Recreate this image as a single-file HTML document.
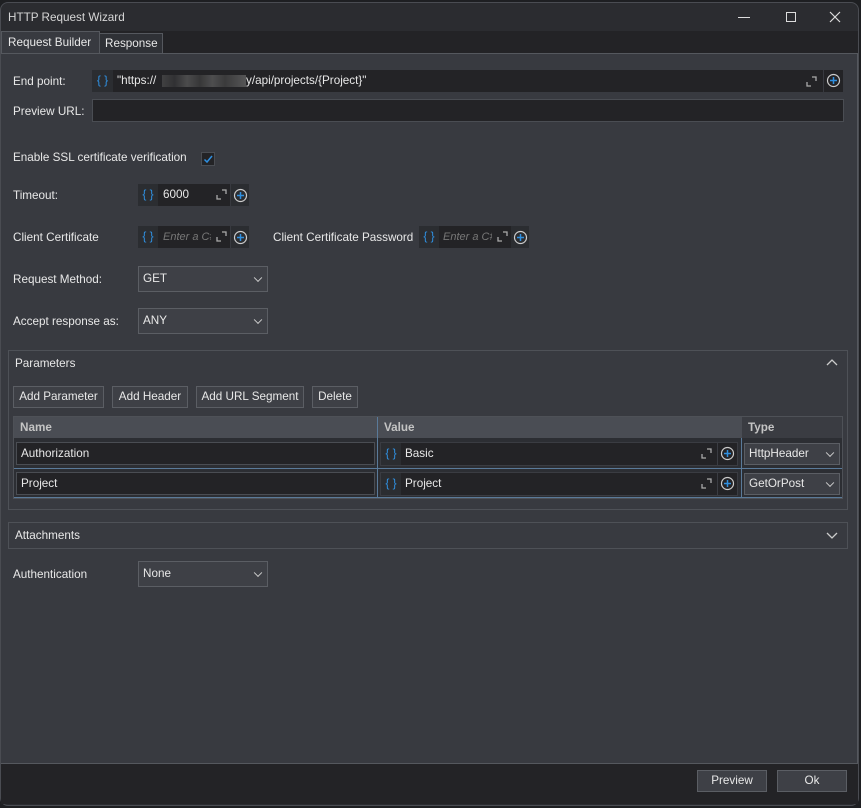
<!DOCTYPE html>
<html><head><meta charset="utf-8"><style>
*{box-sizing:border-box;margin:0;padding:0}
body{width:861px;height:808px;background:#1e1f22;font-family:"Liberation Sans",sans-serif;font-size:11.7px;color:#e8e8e8;position:relative;overflow:hidden}
.a{position:absolute}
.t{position:absolute;white-space:nowrap;line-height:14px}
.inp{position:absolute;background:#232326;border:1px solid #4a4d53}
.ex{position:absolute;background:#232326}
.br{position:absolute;background:#2b2d31;color:#2f8fe0;font-size:12px;text-align:center}
.btn{position:absolute;background:#3e4046;border:1px solid #5b5e64;text-align:center;line-height:19px;color:#e8e8e8}
.sel{position:absolute;background:#3e4046;border:1px solid #5b5e64;padding-left:4px;color:#e8e8e8}
.chev{position:absolute;right:6px;top:50%;width:6px;height:6px;border-right:1.3px solid #ccc;border-bottom:1.3px solid #ccc;transform:translateY(-70%) rotate(45deg)}
.ph{color:#777;font-style:italic;font-size:11px}
</style></head><body>
<div class="a" style="left:0;top:2px;width:859px;height:804px;background:#2b2c30;border-radius:8px;border:1px solid #4a4c52"></div>
<div class="t" style="left:8px;top:11px;color:#d6d6d6">HTTP Request Wizard</div>
<div class="a" style="left:738px;top:17px;width:12px;height:1px;background:#ddd"></div>
<div class="a" style="left:786px;top:12px;width:10px;height:10px;border:1px solid #ddd"></div>
<svg class="a" style="left:829px;top:11px" width="12" height="12"><path d="M1 1L11 11M11 1L1 11" stroke="#ddd" stroke-width="1.2"/></svg>
<div class="a" style="left:1px;top:31px;width:857px;height:22px;background:#232326"></div>
<div class="a" style="left:1px;top:31px;width:99px;height:23px;background:#383a40;border:1px solid #55585e;border-bottom:none"></div>
<div class="t" style="left:8px;top:36px">Request Builder</div>
<div class="a" style="left:99px;top:33px;width:64px;height:21px;background:#2f3136;border:1px solid #55585e"></div>
<div class="t" style="left:105px;top:37px">Response</div>
<div class="a" style="left:1px;top:53px;width:857px;height:711px;background:#383a40;border-top:1px solid #55585e;border-right:1px solid #55585e;border-bottom:1px solid #55585e"></div>
<div class="a" style="left:1px;top:764px;width:857px;height:40px;background:#232326"></div>
<div class="btn" style="left:697px;top:770px;width:70px;height:22px">Preview</div>
<div class="btn" style="left:777px;top:770px;width:70px;height:22px">Ok</div>

<div class="t" style="left:13px;top:75px">End point:</div>
<div class="ex" style="left:92px;top:70px;width:751px;height:22px"></div>
<div class="br" style="left:92px;top:70px;width:21px;height:22px;line-height:21px">{ }</div>
<div class="t" style="left:117px;top:74px">"https://</div>
<div class="a" style="left:162px;top:75px;width:84px;height:12px;background:linear-gradient(90deg,#555 0,#3a3a3c 15%,#666 30%,#444 45%,#6a6a6a 60%,#4a4a4a 75%,#777 100%);opacity:.6"></div>
<div class="t" style="left:246px;top:74px">y/api/projects/{Project}"</div>
<svg class="a" style="left:806px;top:76px" width="11" height="11"><path d="M1 6V10H5M6 1H10V5" stroke="#aaa" stroke-width="1.3" fill="none"/></svg>
<div class="a" style="left:823px;top:70px;width:1px;height:22px;background:#383a40"></div>
<svg class="a" style="left:826px;top:73px" width="15" height="15"><circle cx="7.5" cy="7.5" r="6" stroke="#ccc" stroke-width="1.2" fill="none"/><path d="M7.5 4V11M4 7.5H11" stroke="#2f8fe0" stroke-width="1.5"/></svg>

<div class="t" style="left:13px;top:105px">Preview URL:</div>
<div class="inp" style="left:92px;top:99px;width:752px;height:23px"></div>

<div class="t" style="left:13px;top:151px">Enable SSL certificate verification</div>
<div class="a" style="left:201px;top:152px;width:14px;height:14px;background:#232326;border:1px solid #4a4d53"></div>
<svg class="a" style="left:202px;top:153px" width="12" height="12"><path d="M2.5 6.5L5 9L10 3" stroke="#2f8fe0" stroke-width="1.5" fill="none"/></svg>

<div class="t" style="left:13px;top:189px">Timeout:</div>
<div class="ex" style="left:138px;top:184px;width:92px;height:22px"></div>
<div class="br" style="left:138px;top:184px;width:20px;height:22px;line-height:21px">{ }</div>
<div class="t" style="left:163px;top:188px">6000</div>
<svg class="a" style="left:216px;top:189px" width="11" height="11"><path d="M1 6V10H5M6 1H10V5" stroke="#aaa" stroke-width="1.3" fill="none"/></svg>
<div class="ex" style="left:231px;top:184px;width:18px;height:22px;background:#2b2d31"></div>
<svg class="a" style="left:233px;top:188px" width="15" height="15"><circle cx="7.5" cy="7.5" r="6" stroke="#ccc" stroke-width="1.2" fill="none"/><path d="M7.5 4V11M4 7.5H11" stroke="#2f8fe0" stroke-width="1.5"/></svg>

<div class="t" style="left:13px;top:231px">Client Certificate</div>
<div class="ex" style="left:138px;top:226px;width:92px;height:22px"></div>
<div class="br" style="left:138px;top:226px;width:20px;height:22px;line-height:21px">{ }</div>
<div class="t ph" style="left:163px;top:230px">Enter a C#</div>
<div class="ex" style="left:211px;top:226px;width:19px;height:22px"></div>
<svg class="a" style="left:216px;top:231px" width="11" height="11"><path d="M1 6V10H5M6 1H10V5" stroke="#aaa" stroke-width="1.3" fill="none"/></svg>
<div class="ex" style="left:231px;top:226px;width:18px;height:22px;background:#2b2d31"></div>
<svg class="a" style="left:233px;top:230px" width="15" height="15"><circle cx="7.5" cy="7.5" r="6" stroke="#ccc" stroke-width="1.2" fill="none"/><path d="M7.5 4V11M4 7.5H11" stroke="#2f8fe0" stroke-width="1.5"/></svg>
<div class="t" style="left:273px;top:231px">Client Certificate Password</div>
<div class="ex" style="left:419px;top:226px;width:92px;height:22px"></div>
<div class="br" style="left:419px;top:226px;width:20px;height:22px;line-height:21px">{ }</div>
<div class="t ph" style="left:443px;top:230px">Enter a C#</div>
<div class="ex" style="left:492px;top:226px;width:19px;height:22px"></div>
<svg class="a" style="left:497px;top:231px" width="11" height="11"><path d="M1 6V10H5M6 1H10V5" stroke="#aaa" stroke-width="1.3" fill="none"/></svg>
<div class="ex" style="left:511px;top:226px;width:18px;height:22px;background:#2b2d31"></div>
<svg class="a" style="left:513px;top:230px" width="15" height="15"><circle cx="7.5" cy="7.5" r="6" stroke="#ccc" stroke-width="1.2" fill="none"/><path d="M7.5 4V11M4 7.5H11" stroke="#2f8fe0" stroke-width="1.5"/></svg>

<div class="t" style="left:13px;top:273px">Request Method:</div>
<div class="sel" style="left:138px;top:266px;width:130px;height:26px;line-height:24px">GET<span class="chev"></span></div>
<div class="t" style="left:13px;top:315px">Accept response as:</div>
<div class="sel" style="left:138px;top:308px;width:130px;height:26px;line-height:24px">ANY<span class="chev"></span></div>

<div class="a" style="left:8px;top:350px;width:840px;height:160px;border:1px solid #4e5157"></div>
<div class="t" style="left:15px;top:357px">Parameters</div>
<svg class="a" style="left:826px;top:359px" width="12" height="8"><path d="M1 6L6 1L11 6" stroke="#ccc" stroke-width="1.3" fill="none"/></svg>
<div class="btn" style="left:13px;top:386px;width:91px;height:22px">Add Parameter</div>
<div class="btn" style="left:112px;top:386px;width:76px;height:22px">Add Header</div>
<div class="btn" style="left:196px;top:386px;width:108px;height:22px">Add URL Segment</div>
<div class="btn" style="left:312px;top:386px;width:46px;height:22px">Delete</div>

<div class="a" style="left:13px;top:416px;width:830px;height:83px;border:1px solid #4e5157;background:#2c2e33"></div>
<div class="a" style="left:14px;top:417px;width:728px;height:21px;background:#4a4d54"></div>
<div class="a" style="left:742px;top:417px;width:100px;height:21px;background:#3a3c42"></div>
<div class="a" style="left:377px;top:417px;width:1px;height:81px;background:#5a7a99"></div>
<div class="a" style="left:741px;top:438px;width:1px;height:60px;background:#5a7a99"></div>
<div class="t" style="left:20px;top:421px;color:#c4c4c4;font-weight:bold">Name</div>
<div class="t" style="left:384px;top:421px;color:#c4c4c4;font-weight:bold">Value</div>
<div class="t" style="left:748px;top:421px;color:#c4c4c4;font-weight:bold">Type</div>
<div class="a" style="left:14px;top:468px;width:828px;height:1px;background:#5a7a99"></div>
<div class="a" style="left:14px;top:497px;width:828px;height:1px;background:#5a7a99"></div>

<div class="inp" style="left:16px;top:442px;width:359px;height:23px"></div>
<div class="t" style="left:21px;top:447px">Authorization</div>
<div class="inp" style="left:16px;top:472px;width:359px;height:23px"></div>
<div class="t" style="left:21px;top:477px">Project</div>

<div class="ex" style="left:380px;top:442px;width:358px;height:24px;border:1px solid #3a3c42"></div>
<div class="br" style="left:381px;top:443px;width:20px;height:22px;line-height:21px">{ }</div>
<div class="t" style="left:405px;top:447px">Basic</div>
<svg class="a" style="left:701px;top:448px" width="11" height="11"><path d="M1 6V10H5M6 1H10V5" stroke="#aaa" stroke-width="1.3" fill="none"/></svg>
<div class="a" style="left:717px;top:443px;width:1px;height:22px;background:#3a3c42"></div>
<svg class="a" style="left:720px;top:446px" width="15" height="15"><circle cx="7.5" cy="7.5" r="6" stroke="#ccc" stroke-width="1.2" fill="none"/><path d="M7.5 4V11M4 7.5H11" stroke="#2f8fe0" stroke-width="1.5"/></svg>

<div class="ex" style="left:380px;top:472px;width:358px;height:24px;border:1px solid #3a3c42"></div>
<div class="br" style="left:381px;top:473px;width:20px;height:22px;line-height:21px">{ }</div>
<div class="t" style="left:405px;top:477px">Project</div>
<svg class="a" style="left:701px;top:478px" width="11" height="11"><path d="M1 6V10H5M6 1H10V5" stroke="#aaa" stroke-width="1.3" fill="none"/></svg>
<div class="a" style="left:717px;top:473px;width:1px;height:22px;background:#3a3c42"></div>
<svg class="a" style="left:720px;top:476px" width="15" height="15"><circle cx="7.5" cy="7.5" r="6" stroke="#ccc" stroke-width="1.2" fill="none"/><path d="M7.5 4V11M4 7.5H11" stroke="#2f8fe0" stroke-width="1.5"/></svg>

<div class="sel" style="left:744px;top:443px;width:96px;height:22px;line-height:20px">HttpHeader<span class="chev"></span></div>
<div class="sel" style="left:744px;top:473px;width:96px;height:22px;line-height:20px">GetOrPost<span class="chev"></span></div>

<div class="a" style="left:8px;top:522px;width:840px;height:27px;border:1px solid #4e5157"></div>
<div class="t" style="left:15px;top:529px">Attachments</div>
<svg class="a" style="left:826px;top:532px" width="12" height="8"><path d="M1 1L6 6L11 1" stroke="#ccc" stroke-width="1.3" fill="none"/></svg>

<div class="t" style="left:13px;top:568px">Authentication</div>
<div class="sel" style="left:138px;top:561px;width:130px;height:26px;line-height:24px">None<span class="chev"></span></div>
</body></html>
